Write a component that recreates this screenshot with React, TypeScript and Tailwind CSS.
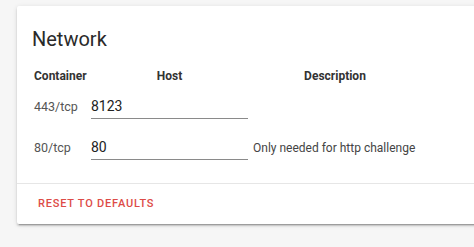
import React from 'react';

const ports = [
  { container: '443/tcp', host: '8123', description: '' },
  { container: '80/tcp', host: '80', description: 'Only needed for http challenge' },
];

const PortRow = ({ container, host, description, className = '' }) => (
  <div className={`flex items-end ${className}`}>
    <div className="w-[57px] pb-[3px] text-[12.5px] leading-[18px] text-[#555]">
      {container}
    </div>
    <div className="w-[157px] border-b border-[#8a8a8a] pb-[3px]">
      <input
        className="block h-[18px] w-full p-0 bg-transparent text-[14px] leading-[18px] text-[#222] outline-none"
        defaultValue={host}
      />
    </div>
    <div className="pl-[5px] pb-[3px] text-[12px] leading-[18px] text-[#444]">
      {description}
    </div>
  </div>
);

const App = () => {
  return (
    <div
      className="w-[474px] h-[247px] overflow-hidden bg-[#f6f6f6] pt-[6px] pl-[17px]"
      style={{ fontFamily: 'Roboto, "Liberation Sans", sans-serif' }}
    >
      <div className="w-[480px] rounded-[2px] bg-white shadow-[0_2px_2px_0_rgba(0,0,0,0.14),0_1px_5px_0_rgba(0,0,0,0.12),0_3px_1px_-2px_rgba(0,0,0,0.2)]">
        <div className="pl-[15px] pt-[19px] text-[20px] leading-[28px] text-[#2a2a2a]">
          Network
        </div>
        <div className="pl-[17px] pt-[13px]">
          <div className="flex h-[20px] items-center text-[12px] font-bold text-[#333]">
            <div className="w-[57px]">Container</div>
            <div className="w-[157px] text-center">Host</div>
            <div className="w-[169px] pl-[5px] text-center">Description</div>
          </div>
          <PortRow {...ports[0]} className="mt-[11px]" />
          <PortRow {...ports[1]} className="mt-[19px]" />
        </div>
        <div className="mt-[23px] border-t border-[#e6e6e6]">
          <div className="flex h-[40px] items-center pl-[21px]">
            <button className="text-[11px] font-medium uppercase tracking-[0.8px] text-[#dd4b47]">
              Reset to defaults
            </button>
          </div>
        </div>
      </div>
    </div>
  );
};

export default App;
